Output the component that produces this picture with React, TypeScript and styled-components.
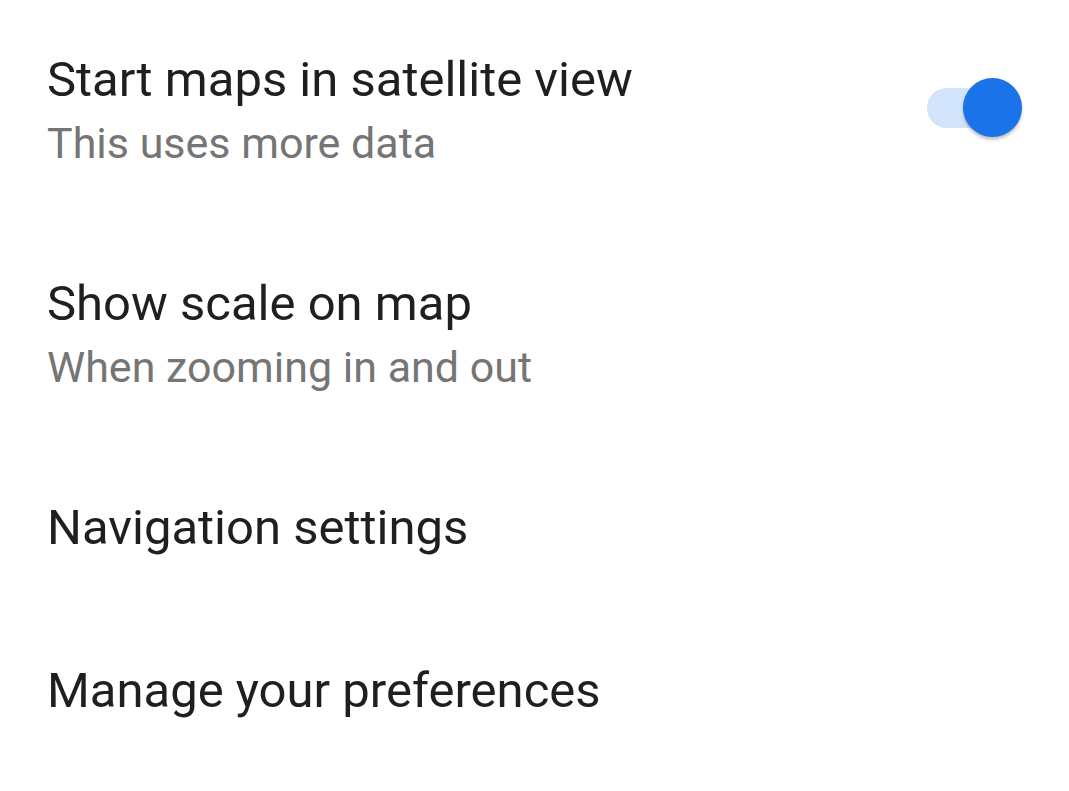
import React from "react";
import styled, { createGlobalStyle } from "styled-components";

const GlobalStyle = createGlobalStyle`
  html, body {
    margin: 0;
    padding: 0;
    background: #ffffff;
  }
  body {
    font-family: Roboto, "Noto Sans", Arial, sans-serif;
    -webkit-font-smoothing: antialiased;
  }
`;

const Page = styled.main`
  width: 1069px;
  height: 791px;
  box-sizing: border-box;
  background: #ffffff;
  padding: 52px 47px 0 47px;
  display: flex;
  flex-direction: column;
  gap: 107px;
  overflow: hidden;
`;

const Row = styled.div`
  display: flex;
  align-items: center;
  justify-content: space-between;
`;

const Texts = styled.div`
  display: flex;
  flex-direction: column;
`;

const Title = styled.div`
  font-size: 49px;
  line-height: 56px;
  color: #1f1f1f;
  font-weight: 400;
  letter-spacing: 0;
  white-space: nowrap;
`;

const Subtitle = styled.div`
  margin-top: 9px;
  font-size: 43px;
  line-height: 52px;
  color: #757575;
  font-weight: 400;
  white-space: nowrap;
`;

const SwitchWrap = styled.div`
  position: relative;
  width: 95px;
  height: 59px;
  margin-top: -7px;
  flex-shrink: 0;
`;

const Track = styled.div<{ $on: boolean }>`
  position: absolute;
  left: 0;
  top: 10px;
  width: 85px;
  height: 40px;
  border-radius: 20px;
  background: ${(p) => (p.$on ? "#d2e3fc" : "#dadce0")};
`;

const Thumb = styled.div<{ $on: boolean }>`
  position: absolute;
  top: 0;
  left: ${(p) => (p.$on ? "36px" : "0")};
  width: 59px;
  height: 59px;
  border-radius: 50%;
  background: ${(p) => (p.$on ? "#1a73e8" : "#f1f3f4")};
  box-shadow: 0 3px 3px rgba(0, 0, 0, 0.22), 0 0 2px rgba(0, 0, 0, 0.08);
`;

function Switch({ on }: { on: boolean }) {
  return (
    <SwitchWrap role="switch" aria-checked={on}>
      <Track $on={on} />
      <Thumb $on={on} />
    </SwitchWrap>
  );
}

type Item = { title: string; subtitle?: string; toggle?: boolean };

const items: Item[] = [
  { title: "Start maps in satellite view", subtitle: "This uses more data", toggle: true },
  { title: "Show scale on map", subtitle: "When zooming in and out" },
  { title: "Navigation settings" },
  { title: "Manage your preferences" },
];

export default function App() {
  return (
    <>
      <GlobalStyle />
      <Page>
        {items.map((it) => (
          <Row key={it.title}>
            <Texts>
              <Title>{it.title}</Title>
              {it.subtitle && <Subtitle>{it.subtitle}</Subtitle>}
            </Texts>
            {it.toggle !== undefined && <Switch on={it.toggle} />}
          </Row>
        ))}
      </Page>
    </>
  );
}
